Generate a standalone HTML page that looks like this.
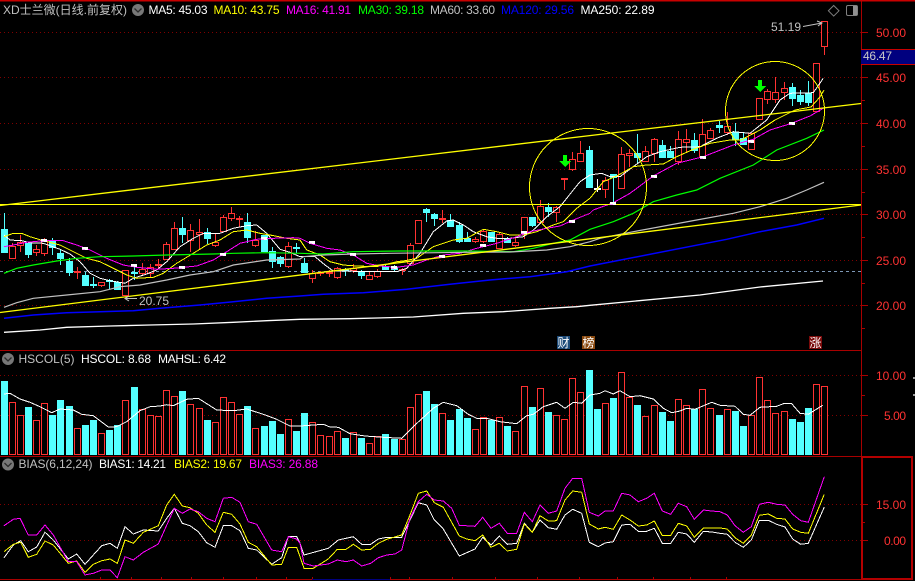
<!DOCTYPE html>
<html lang="zh"><head><meta charset="utf-8"><title>XD士兰微</title>
<style>
html,body{margin:0;padding:0;background:#000;width:915px;height:581px;overflow:hidden}
svg{display:block;position:absolute;left:0;top:0}
text{font-family:"Liberation Sans","WenQuanYi Zen Hei","Noto Sans CJK SC",sans-serif;font-size:12px}
.r{fill:#ff3232}
</style></head><body>
<svg id="s" width="915" height="581" viewBox="0 0 915 581" shape-rendering="crispEdges">
<rect width="915" height="581" fill="#000"/>
<g id="grid" stroke="#800000" stroke-width="1" stroke-dasharray="1 3" fill="none"><path d="M0 32.5H861M0 77.5H861M0 123.5H861M0 169.5H861M0 214.5H861M0 260.5H861M0 305.5H861M0 375.5H861M0 415.5H861M0 504.5H861M0 540.5H861"/></g>
<path d="M0 271.5H861" stroke="#7c97b5" stroke-dasharray="3 3" fill="none"/>
<g id="cand"></g><g id="vol"></g>
<g id="lines" fill="none"></g>
<g fill="none" stroke="#ffff00" id="trend">
<path d="M0 205.5L861 103.5" stroke-width="1.3" shape-rendering="auto"/><path d="M0 204.5H861"/><path d="M0 312.5L861 205" stroke-width="1.3" shape-rendering="auto"/>
<circle cx="588" cy="187" r="58.5"/><circle cx="775" cy="111" r="49.5"/>
</g>
<g id="marks"></g>
<g fill="#00ff00"><path d="M563 155h4v6h4l-6 6-6-6h4z"/><path d="M758 80h4v6h4l-6 6-6-6h4z"/></g>
<!-- frame -->
<g fill="none" stroke="#a80000">
<path d="M0 350.5H861M0 456.5H861M0 579.5H861M861.5 0V457"/>
<path d="M861 32.5h7M861 77.5h7M861 123.5h7M861 169.5h7M861 214.5h7M861 260.5h7M861 305.5h7M861 100.5h4M861 146.5h4M861 192.5h4M861 237.5h4M861 283.5h4M861 328.5h4M861 375.5h7M861 415.5h7M861 395.5h4M861 504.5h7M861 540.5h7M861 522.5h4M100.5 577v3M131.5 577v3M161.5 577v3M191.5 577v3M223.5 577v3M256.5 577v3M286.5 577v3M312.5 577v3M390.5 577v3M409.5 577v3M452.5 577v3M495.5 577v3M537.5 577v3M579.5 577v3M617.5 577v3M653.5 577v3M690.5 577v3M726.5 577v3"/>
</g>
<path d="M312 579.5H390" stroke="#00007f"/>
<rect x="0" y="0" width="915" height="1.5" fill="#c80000"/>
<rect x="862" y="457" width="50" height="122" fill="none" stroke="#b40000" stroke-width="2"/>
<rect x="861" y="49" width="54" height="15" fill="#00007f"/>
<path d="M861 49.5H915M861 64.5H915" stroke="#c80000"/>
<rect x="913" y="377" width="2" height="2" fill="#999"/><rect x="913" y="394" width="2" height="2" fill="#999"/>
<g shape-rendering="auto">
<text x="3" y="14" fill="#c0c0c0" textLength="124" lengthAdjust="spacing">XD士兰微(日线.前复权)</text>
<circle cx="138" cy="10" r="6" fill="#777"/><path d="M134.5 8.5l3.5 3.5 3.5-3.5" fill="none" stroke="#2a2a2a" stroke-width="1.3"/>
<text x="148.5" y="14" fill="#fff" textLength="59">MA5: 45.03</text>
<text x="213.5" y="14" fill="#ff0" textLength="66">MA10: 43.75</text>
<text x="286" y="14" fill="#f0f" textLength="65">MA16: 41.91</text>
<text x="358" y="14" fill="#0f0" textLength="66">MA30: 39.18</text>
<text x="430" y="14" fill="#c0c0c0" textLength="65">MA60: 33.60</text>
<text x="501" y="14" fill="#00f" textLength="73">MA120: 29.56</text>
<text x="580.5" y="14" fill="#fff" textLength="74">MA250: 22.89</text>
<path d="M833.7 5.5l5.3 5.3-5.3 5.3-5.3-5.3z" fill="none" stroke="#808080"/>
<rect x="846.5" y="5.5" width="11" height="10" rx="1.5" fill="none" stroke="#808080"/><rect x="853" y="6" width="4" height="9" fill="#909090"/>
<text x="771" y="31" fill="#c0c0c0" textLength="30">51.19</text>
<path d="M803 26.5L822 23M817 21l5 2-4 3" fill="none" stroke="#c0c0c0"/>
<text x="139" y="305" fill="#c0c0c0" textLength="30">20.75</text>
<path d="M137 298.5H126M129 296l-4 2.500 4 2.500" fill="none" stroke="#c0c0c0"/>
<text x="863" y="60" fill="#c8c8c8" textLength="29">46.47</text>
<text class="r" x="876" y="37" textLength="30">50.00</text>
<text class="r" x="876" y="82" textLength="30">45.00</text>
<text class="r" x="876" y="128" textLength="30">40.00</text>
<text class="r" x="876" y="174" textLength="30">35.00</text>
<text class="r" x="876" y="219" textLength="30">30.00</text>
<text class="r" x="876" y="265" textLength="30">25.00</text>
<text class="r" x="876" y="310" textLength="30">20.00</text>
<text class="r" x="876" y="380" textLength="30">10.00</text>
<text class="r" x="884" y="420" textLength="22">5.00</text>
<text class="r" x="876" y="509" textLength="30">15.00</text>
<text class="r" x="884" y="545" textLength="22">0.00</text>
<rect x="557" y="336" width="13" height="13" fill="#1c4a78"/><text x="557.500" y="347" fill="#fff">财</text>
<rect x="582" y="336" width="13" height="13" fill="#8a4a10"/><text x="582.500" y="347" fill="#fff">榜</text>
<rect x="809" y="336" width="13" height="13" fill="#7a0a0a"/><text x="809.500" y="347" fill="#fff">涨</text>
<circle cx="8" cy="359" r="6" fill="#777"/><path d="M4.500 357.500l3.500 3.500 3.500-3.500" fill="none" stroke="#2a2a2a" stroke-width="1.3"/>
<text x="18.500" y="363" fill="#c0c0c0" textLength="56">HSCOL(5)</text>
<text x="81" y="363" fill="#fff" textLength="70">HSCOL: 8.68</text>
<text x="158" y="363" fill="#fff" textLength="68">MAHSL: 6.42</text>
<circle cx="8" cy="464.500" r="6" fill="#777"/><path d="M4.500 463l3.500 3.500 3.500-3.500" fill="none" stroke="#2a2a2a" stroke-width="1.3"/>
<text x="18.500" y="468" fill="#c0c0c0" textLength="74">BIAS(6,12,24)</text>
<text x="99" y="468" fill="#fff" textLength="67">BIAS1: 14.21</text>
<text x="174" y="468" fill="#ff0" textLength="68">BIAS2: 19.67</text>
<text x="249" y="468" fill="#f0f" textLength="69">BIAS3: 26.88</text>
</g>
</svg>
<script>
var NS='http://www.w3.org/2000/svg',CY='#54ffff',RD='#ff3232';
function el(p,n,a){var e=document.createElementNS(NS,n);for(var k in a)e.setAttribute(k,a[k]);document.getElementById(p).appendChild(e);}
function bx(i){return Math.floor(1+8.125*i);}
/* candles: t(1 cyan,0 red),wickTop,bodyTop,bodyBot,wickBot (zoom coords) */
var C=[[1,70,117,185,185],[0,160,168,203,203],[0,135,155,165,185],[1,158,160,192,203],[0,165,178,185,198],[0,145,150,190,198],[1,143,153,172,195],[1,180,190,205,225],[1,203,213,246,258],[0,232,243,246,268],[1,245,255,285,288],[1,260,282,285,295],[0,275,275,285,290],[1,268,270,272,297],[1,272,276,298,300],[0,240,241,315,317],[1,232,245,250,270],[0,220,238,250,258],[0,222,232,248,260],[0,207,222,224,238],[0,155,163,207,207],[0,95,115,177,180],[1,80,114,132,158],[0,102,121,150,186],[0,88,127,132,178],[1,114,127,143,162],[0,130,157,164,170],[0,75,82,122,125],[0,52,70,83,92],[0,78,84,86,110],[1,70,97,140,158],[0,122,150,164,172],[1,135,136,183,183],[1,172,183,214,234],[1,198,202,219,232],[0,157,169,227,234],[1,160,172,174,190],[1,205,218,246,246],[0,240,250,265,278],[0,242,247,249,257],[0,240,246,249,262],[0,230,235,260,267],[1,235,238,240,258],[0,222,235,240,248],[1,240,245,255,267],[0,245,256,266,266],[0,238,242,257,263],[1,222,228,236,238],[1,225,232,237,243],[0,235,238,240,255],[0,160,166,220,222],[0,90,90,158,158],[1,55,57,66,95],[1,70,72,84,107],[0,60,84,86,100],[1,72,90,108,108],[1,95,105,152,158],[1,125,144,153,155],[0,140,148,154,160],[0,118,122,152,158],[1,125,127,152,155],[0,128,133,173,175],[1,140,143,157,160],[0,145,157,165,172],[0,82,82,130,147],[1,82,82,106,110],[0,30,49,96,103],[1,40,52,62,80],[0,48,50,65,95],
[0,385,385,387,420],[0,307,328,358,362],[0,273,310,332,332],[1,288,300,410,410],[2,388,414,416,425],[0,380,391,418,443],[1,372,372,381,460],[0,292,313,413,413],[0,297,310,316,350],[1,252,310,320,340],[0,288,302,332,335],[0,265,268,310,335],[1,270,286,322,322],[1,288,302,320,322],[0,243,268,332,345],[0,237,268,275,305],[1,250,270,300,310],[0,208,253,320,320],[0,235,241,263,263],[1,212,226,230,248],[0,186,229,245,255],[1,220,245,267,288],[1,250,265,282,285],[0,248,250,298,298],[0,145,145,208,208],[0,118,124,146,162],[0,82,127,146,158],[0,97,115,127,150],[1,98,112,143,167],[1,120,134,154,165],[1,94,130,156,168],[0,40,40,183,183]];
C.forEach(function(c,i){var b=i<=68?190:50,y=function(z){return Math.round(b+z/3);};
 var x=bx(i),w=y(c[1]),t=y(c[2]),o=y(c[3]),l=y(c[4]);if(o<=t)o=t+1;
 var col=c[0]==1?CY:(c[0]==2?'#fff':RD);
 el('cand','path',{d:'M'+(x+3.5)+' '+w+'V'+l,stroke:col,fill:'none'});
 if(c[0]==0) el('cand','rect',{x:x+.5,y:t+.5,width:6,height:o-t,fill:'#000',stroke:col});
 else el('cand','rect',{x:x,y:t,width:7,height:Math.max(1,o-t+1),fill:col});
});
el('cand','path',{d:'M824.5 46V55',stroke:RD,fill:'none'});
el('cand','rect',{x:821.5,y:21.5,width:6,height:25,fill:'#000',stroke:RD});
/* volume */
var V='c108 r172 r211 c186 r226 r175 c210 c165 c183 r250 c240 c225 r265 c255 c240 r166 c126 r193 r211 r214 r136 r154 c138 r178 r190 c225 r232 r157 r172 r208 c183 r250 c243 c228 c267 r223 c258 c204 r232 r271 r274 r259 c279 r262 c279 r295 r274 c267 c282 r283 r187 r148 c138 c177 r205 c225 c192 c219 r253 r217 c226 r217 c243 r259 r124 c186 r130 c201 r211 r223 r100 r142 c75 c192 r175 c159 r82 r157 c180 r214 r181 c201 c228 r163 r181 c193 r133 r190 c210 r193 c198 c243 r211 r97 r166 r205 r199 c222 c231 c189 r118 r124'.split(' ');
V.forEach(function(v,i){var t=Math.round(345+(+v.slice(1))/3),x=bx(i);
 if(v[0]=='c')el('vol','rect',{x:x,y:t,width:7,height:455-t,fill:CY});
 else el('vol','rect',{x:x+.5,y:t+.5,width:6,height:454-t,fill:'#000',stroke:RD});});
/* polylines: segments [xbase,ybase,[x,y,...]] */
function pl(col,segs,sw){var pts=[],last=-1;segs.forEach(function(s){for(var i=0;i<s[2].length;i+=2){var x=s[0]+s[2][i]/3,y=s[1]+s[2][i+1]/3;if(x>last){pts.push(x.toFixed(1)+','+y.toFixed(1));last=x;}}});var a={points:pts.join(' '),stroke:col};if(sw){a['stroke-width']=sw;a['shape-rendering']='auto';}el('lines','polyline',a);}
pl('#fff',[[0,190,[12,135,30,150,65,152,90,158,130,160,180,178,210,192,240,215,270,250,300,265,330,272,375,280,400,265,440,252,470,240,500,215,540,170,580,145,610,130,660,130,700,115,740,107,770,105,800,130,840,178,870,187,900,200]],[290,190,[30,197,75,200,105,225,130,243,170,243,220,245,280,245,320,245,350,235,390,190,430,125,470,93,490,90,520,105,550,125,590,140,620,145,660,145,700,140,730,120,770,80,810,50,850,0]],[520,50,[100,490,140,445,180,395,210,375,245,370,270,380,300,380,340,350,380,320,420,305,480,292,540,290,590,265,640,245,690,250,740,210,780,150,810,130,880,128,910,85]]]);
pl('#ffff00',[[0,190,[12,140,40,130,65,130,90,140,130,152,180,165,220,185,260,205,300,215,340,235,380,255,410,265,460,262,490,250,530,220,580,190,620,165,660,150,700,125,740,120,780,130,810,135,860,145,900,150]],[290,190,[20,150,50,180,90,195,120,215,160,225,200,228,260,230,320,215,345,212,380,205,430,170,490,150,530,145,580,118,620,125,660,135,700,135,740,125,790,105,820,95,860,55,900,25]],[520,50,[130,510,170,475,210,425,250,395,290,378,340,350,380,345,430,342,470,320,520,298,570,280,630,270,663,270,720,240,765,210,825,180,873,171,900,141,912,120]]]);
pl('#ff00ff',[[0,190,[12,170,40,165,80,157,130,152,190,152,230,165,270,180,320,205,370,225,410,232,470,238,520,235,590,228,640,210,680,185,720,160,770,148,820,145,880,143,900,145]],[290,190,[25,145,60,160,110,175,150,180,190,195,230,220,270,228,320,232,370,225,410,210,460,195,510,190,560,175,620,160,680,140,720,125,770,115,810,108,850,90,900,70]],[520,50,[220,480,280,458,330,430,400,378,470,340,510,330,550,320,640,285,700,268,750,240,815,220,870,198,910,175]]]);
pl('#00ff00',[[0,190,[12,250,50,235,100,225,170,213,230,205,300,200,400,198,500,195,640,192,700,190,800,188,900,190]],[290,190,[30,192,100,192,190,185,330,183,530,183,670,185,730,175,790,160,840,150,900,118]],[520,50,[280,515,340,490,400,455,470,435,530,420,600,385,700,345,770,300,860,265,912,240]]],1.2);
pl('#c0c0c0',[[0,190,[12,352,50,338,100,325,200,315,300,305,360,290,420,285,500,270,570,255,640,245,700,225,800,210,900,207]],[290,190,[40,200,100,195,190,192,300,190,530,187,660,186,770,180,840,170,900,155]],[520,50,[240,565,340,545,530,510,640,490,720,470,800,445,860,420,912,397]]],1.2);
pl('#0000ff',[[0,190,[12,385,100,375,200,368,300,365,400,362,480,355,600,345,700,335,800,325,900,318]],[290,190,[100,313,220,308,350,298,480,283,600,270,720,260,830,245,900,228]],[520,50,[620,568,720,545,830,525,912,505]]],1.5);
pl('#fff',[[0,190,[12,427,120,420,200,412,330,408,450,405,580,402,700,397,800,392,900,388]],[290,190,[180,386,370,381,520,370,640,365,780,355,860,350,900,346]],[0,0,[2100,885,2280,861,2469,843]]],1.3);
/* MAHSL */
pl('#fff',[[0,345,[12,147,30,145,60,162,90,172,120,185,155,203,180,192,220,195,245,208,280,212,325,246,350,245,380,230,420,197,450,185,480,183,500,179,520,182,560,163,595,160,650,195,700,197,740,192,790,208,830,223,870,243,900,243]],[300,345,[0,240,70,238,90,246,115,247,150,266,195,273,250,277,305,280,345,240,400,190,430,172,470,182,505,208,530,220,560,220,600,230,650,236,680,212,700,208,730,185,770,172,795,190,820,172,845,175,870,150,900,145]],[600,345,[15,137,40,147,60,137,90,155,120,152,160,162,190,190,215,203,240,198,260,190,285,193,335,172,360,181,405,184,430,208,450,211,480,187,530,184,550,176,575,176,600,205,625,208,668,181]]]);
/* BIAS */
pl('#fff',[[0,455,[12,308,40,270,62,257,85,290,110,276,135,232,160,255,205,312,230,297,255,328,280,300,305,272,330,265,352,280,375,215,400,237,430,225,475,228,500,190,523,160,547,205,570,212,595,230,620,263,645,277,670,212,695,212,720,227,745,280,770,285,815,328,845,308,865,245,890,245,900,265]],[300,455,[12,300,85,280,115,255,160,245,185,268,212,268,235,252,260,247,305,247,355,143,380,150,403,195,430,222,478,303,525,282,548,247,573,270,598,243,622,268,650,265,673,205,697,232,720,195,745,218,770,223,795,180,818,163,845,175,868,262,895,275]],[600,455,[15,264,40,260,65,210,90,208,115,229,140,229,163,220,187,265,212,265,235,232,260,237,283,262,310,229,335,231,360,235,382,238,405,262,430,277,454,255,478,196,505,196,530,208,555,216,578,252,602,268,625,265,673,156]]]);
pl('#ffff00',[[0,455,[12,290,40,268,62,262,85,307,110,298,135,258,160,270,205,325,230,318,255,352,280,328,305,317,330,312,352,325,375,255,400,265,430,232,475,212,500,150,523,118,547,153,570,158,595,175,620,210,645,232,670,172,695,178,720,207,745,262,770,275,815,330,845,328,865,277,890,277,900,305]],[300,455,[12,340,40,340,85,312,112,283,138,283,160,268,185,285,212,283,235,265,260,253,305,240,330,180,355,115,380,108,403,143,430,157,478,243,500,252,525,257,548,240,573,277,598,265,622,288,650,283,673,207,697,232,720,182,745,198,770,197,795,135,818,108,845,112,868,207,895,222]],[600,455,[15,217,40,223,65,180,90,195,115,213,140,210,163,198,187,242,212,241,235,205,260,213,283,247,310,219,335,219,360,219,382,222,405,248,430,265,454,240,478,181,505,177,530,190,555,192,578,222,602,232,625,235,673,118]]]);
pl('#ff00ff',[[0,455,[12,212,40,193,60,190,85,240,110,240,135,210,160,240,205,320,230,320,255,360,280,355,305,345,330,345,352,368,375,305,400,315,430,292,475,267,523,160,547,175,570,162,595,170,620,190,645,200,670,130,695,127,720,142,745,200,770,208,815,285,845,290,865,245,890,252,900,265]],[300,455,[12,325,40,333,85,327,112,315,138,320,160,315,185,333,212,325,235,308,260,300,285,297,305,285,330,190,355,140,380,118,403,135,430,138,455,160,478,211,525,214,548,187,573,220,598,205,622,235,650,235,673,172,697,200,720,150,745,175,770,168,795,100,818,70,845,70,868,172,895,183]],[600,455,[15,168,40,168,65,115,90,120,115,140,140,130,163,115,187,168,212,178,235,145,260,155,283,193,310,165,335,168,360,170,382,180,405,212,430,232,454,215,478,148,505,142,530,148,555,150,578,178,602,197,625,202,673,65]]]);
/* white markers on MA16 */
[[44,240],[85,248],[134,265],[182,267],[223,254],[264,238],[312,242],[353,254],[394,267],[442,256],[483,245],[524,232],[572,221],[613,203],[654,176],[703,157],[751,141],[792,123]].forEach(function(p){
 el('marks','rect',{x:p[0]-3,y:p[1]-1,width:6,height:3,fill:'#fff'});
 el('marks','rect',{x:p[0]-3,y:p[1]+1,width:3,height:1,fill:'#ff9cff'});
});
</script>
</body></html>
